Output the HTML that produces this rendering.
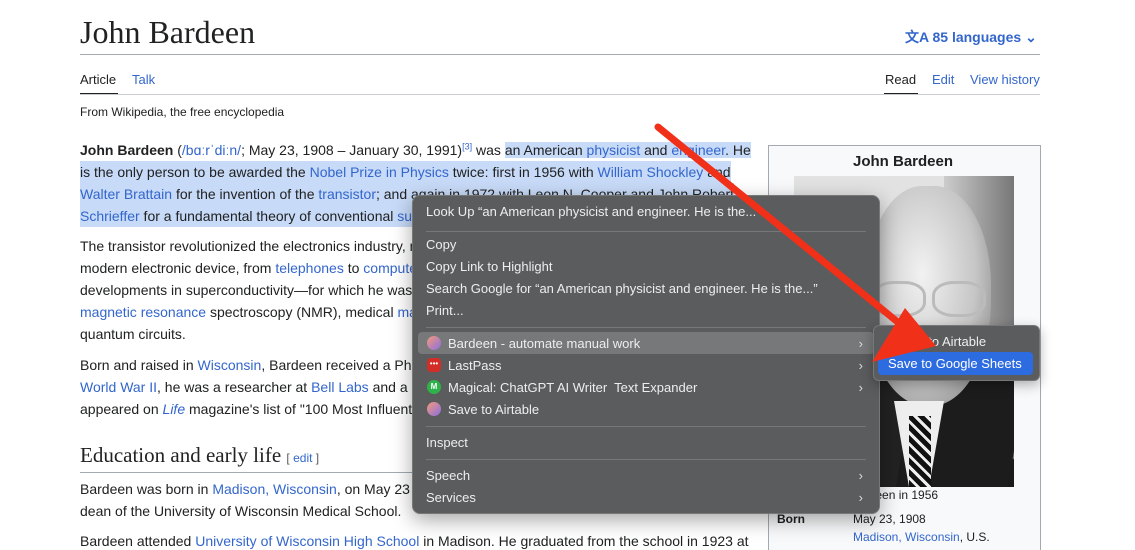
<!DOCTYPE html>
<html><head><meta charset="utf-8"><style>
html,body{margin:0;width:1135px;height:550px;overflow:hidden}
body{background:#fff;font-family:"Liberation Sans",sans-serif;position:relative;color:#202122}
.a{position:absolute;white-space:nowrap}
a,.l{color:#3366cc;text-decoration:none}
.p{font-size:14px;line-height:22px}
sup{line-height:0}
.hl{background:#c7daf7}
.menu{position:absolute;left:412px;top:195px;width:466px;height:317px;background:#5b5c5e;border:1px solid #777;border-radius:8px;box-shadow:0 6px 20px rgba(0,0,0,.35);color:#eee;font-size:13px}
.menu .i{position:absolute;left:13px}
.sep{position:absolute;left:13px;right:13px;height:1px;background:#777}
.chev{position:absolute;right:16px;color:#ddd;font-size:13px}
.ic{position:absolute;left:14px;width:14px;height:14px;border-radius:4px}
</style></head><body>
<div class="a" style="left:80px;top:14px;font-family:'Liberation Serif',serif;font-size:32px">John Bardeen</div>
<div class="a l" style="left:905px;top:27px;font-size:14px;font-weight:bold">文A 85 languages ⌄</div>
<div style="position:absolute;left:80px;top:54px;width:960px;height:1px;background:#a2a9b1"></div>
<div class="a" style="left:80px;top:72px;font-size:13px">Article</div>
<div class="a l" style="left:132px;top:72px;font-size:13px">Talk</div>
<div style="position:absolute;left:80px;top:93px;width:38px;height:2px;background:#202122"></div>
<div class="a" style="left:885px;top:72px;font-size:13px">Read</div>
<div style="position:absolute;left:884px;top:93px;width:34px;height:2px;background:#202122"></div>
<div class="a l" style="left:932px;top:72px;font-size:13px">Edit</div>
<div class="a l" style="left:970px;top:72px;font-size:13px">View history</div>
<div style="position:absolute;left:80px;top:94px;width:960px;height:1px;background:#c8ccd1"></div>
<div class="a" style="left:80px;top:105px;font-size:12px">From Wikipedia, the free encyclopedia</div>

<div class="a p" style="left:80px;top:139px"><b>John Bardeen</b> (<a>/bɑːrˈdiːn/</a>; May 23, 1908 – January 30, 1991)<sup style="font-size:9px" class="l">[3]</sup> was <span class="hl">an American <a>physicist</a> and <a>engineer</a>. He</span></div>
<div class="a p hl" style="left:80px;top:161px">is the only person to be awarded the <a>Nobel Prize in Physics</a> twice: first in 1956 with <a>William Shockley</a> and</div>
<div class="a p hl" style="left:80px;top:183px"><a>Walter Brattain</a> for the invention of the <a>transistor</a>; and again in 1972 with Leon N. Cooper and John Robert</div>
<div class="a p hl" style="left:80px;top:205px"><a>Schrieffer</a> for a fundamental theory of conventional <a>su</a>perconductivity</div>
<div class="a p" style="left:80px;top:235px">The transistor revolutionized the electronics industry, making</div>
<div class="a p" style="left:80px;top:257px">modern electronic device, from <a>telephones</a> to <a>computers</a></div>
<div class="a p" style="left:80px;top:279px">developments in superconductivity—for which he was</div>
<div class="a p" style="left:80px;top:301px"><a>magnetic resonance</a> spectroscopy (NMR), medical <a>ma</a></div>
<div class="a p" style="left:80px;top:323px">quantum circuits.</div>
<div class="a p" style="left:80px;top:354px">Born and raised in <a>Wisconsin</a>, Bardeen received a Ph</div>
<div class="a p" style="left:80px;top:376px"><a>World War II</a>, he was a researcher at <a>Bell Labs</a> and a</div>
<div class="a p" style="left:80px;top:398px">appeared on <a><i>Life</i></a> magazine's list of "100 Most Influent</div>
<div class="a" style="left:80px;top:443px;font-family:'Liberation Serif',serif;font-size:21px">Education and early life <span style="font-family:'Liberation Sans';font-size:12px;color:#54595d">[ <a>edit</a> ]</span></div>
<div style="position:absolute;left:80px;top:472px;width:675px;height:1px;background:#a2a9b1"></div>
<div class="a p" style="left:80px;top:478px">Bardeen was born in <a>Madison, Wisconsin</a>, on May 23</div>
<div class="a p" style="left:80px;top:500px">dean of the University of Wisconsin Medical School.</div>
<div class="a p" style="left:80px;top:530px">Bardeen attended <a>University of Wisconsin High School</a> in Madison. He graduated from the school in 1923 at</div>

<div style="position:absolute;left:768px;top:145px;width:271px;height:420px;background:#f8f9fa;border:1px solid #a2a9b1"></div>
<div class="a" style="left:853px;top:153px;font-size:15px;font-weight:bold">John Bardeen</div>
<div style="position:absolute;left:794px;top:176px;width:220px;height:311px;background:#e2e2e2;overflow:hidden">
 <div style="position:absolute;left:150px;top:0;width:70px;height:311px;background:linear-gradient(90deg,#ccc,#777)"></div>
 <div style="position:absolute;left:-20px;top:260px;width:260px;height:100px;background:#1a1a1a;border-radius:50% 50% 0 0"></div>
 <div style="position:absolute;left:0;top:150px;width:120px;height:200px;background:#222;transform:rotate(-15deg)"></div>
 <div style="position:absolute;left:110px;top:170px;width:110px;height:200px;background:#1c1c1c;transform:rotate(10deg)"></div>
 <div style="position:absolute;left:72px;top:10px;width:125px;height:220px;background:radial-gradient(ellipse at 45% 40%,#f2f2f2,#c6c6c6 55%,#888 90%);border-radius:45% 45% 48% 48%"></div>
 <div style="position:absolute;left:78px;top:105px;width:48px;height:30px;border:3px solid #bbb;border-radius:40%"></div>
 <div style="position:absolute;left:138px;top:105px;width:48px;height:30px;border:3px solid #bbb;border-radius:40%"></div>
 <div style="position:absolute;left:100px;top:225px;width:50px;height:86px;background:#eee;clip-path:polygon(0 0,100% 0,70% 100%,30% 100%)"></div>
 <div style="position:absolute;left:115px;top:240px;width:22px;height:71px;background:repeating-linear-gradient(45deg,#111 0 5px,#eee 5px 8px)"></div>
</div>
<div class="a" style="left:850px;top:488px;font-size:12px">Bardeen in 1956</div>
<div class="a" style="left:777px;top:512px;font-size:12px;font-weight:bold">Born</div>
<div class="a" style="left:853px;top:512px;font-size:12px">May 23, 1908</div>
<div class="a" style="left:853px;top:530px;font-size:12px"><a>Madison, Wisconsin</a>, U.S.</div>

<div class="menu">
<div class="i" style="top:8px">Look Up “an American physicist and engineer. He is the...”</div>
<div class="sep" style="top:35px"></div>
<div class="i" style="top:41px">Copy</div>
<div class="i" style="top:63px">Copy Link to Highlight</div>
<div class="i" style="top:85px">Search Google for “an American physicist and engineer. He is the...”</div>
<div class="i" style="top:107px">Print...</div>
<div class="sep" style="top:131px"></div>
<div style="position:absolute;left:5px;right:5px;top:136px;height:22px;background:#77787a;border-radius:4px"></div>
<div class="ic" style="top:140px;background:linear-gradient(135deg,#f59a7a,#8a6ee0);border-radius:7px"></div>
<div class="i" style="left:35px;top:140px">Bardeen - automate manual work</div><div class="chev" style="top:140px">›</div>
<div class="ic" style="top:162px;background:#d32d27;font-size:8px;color:#fff;text-align:center;line-height:12px">•••</div>
<div class="i" style="left:35px;top:162px">LastPass</div><div class="chev" style="top:162px">›</div>
<div class="ic" style="top:184px;background:#2db34a;border-radius:7px;font-size:8px;color:#fff;font-weight:bold;text-align:center;line-height:14px">M</div>
<div class="i" style="left:35px;top:184px">Magical: ChatGPT AI Writer&nbsp; Text Expander</div><div class="chev" style="top:184px">›</div>
<div class="ic" style="top:206px;background:linear-gradient(135deg,#f59a7a,#8a6ee0);border-radius:7px"></div>
<div class="i" style="left:35px;top:206px">Save to Airtable</div>
<div class="sep" style="top:230px"></div>
<div class="i" style="top:239px">Inspect</div>
<div class="sep" style="top:263px"></div>
<div class="i" style="top:272px">Speech</div><div class="chev" style="top:272px">›</div>
<div class="i" style="top:294px">Services</div><div class="chev" style="top:294px">›</div>
</div>
<div style="position:absolute;left:873px;top:325px;width:165px;height:54px;background:#5b5c5e;border:1px solid #777;border-radius:6px;box-shadow:0 4px 12px rgba(0,0,0,.3)"></div>
<div class="a" style="left:895px;top:334px;font-size:13px;color:#eee">Save to Airtable</div>
<div style="position:absolute;left:878px;top:352px;width:155px;height:23px;background:#2d6be0;border-radius:4px"></div>
<div class="a" style="left:888px;top:356px;font-size:13px;color:#fff">Save to Google Sheets</div>
<svg style="position:absolute;left:0;top:0" width="1135" height="550">
<line x1="658" y1="127" x2="905" y2="328" stroke="#f1301a" stroke-width="7" stroke-linecap="round"/>
<polygon points="872,362 905,308 936,346" fill="#f1301a"/>
</svg>
</body></html>
